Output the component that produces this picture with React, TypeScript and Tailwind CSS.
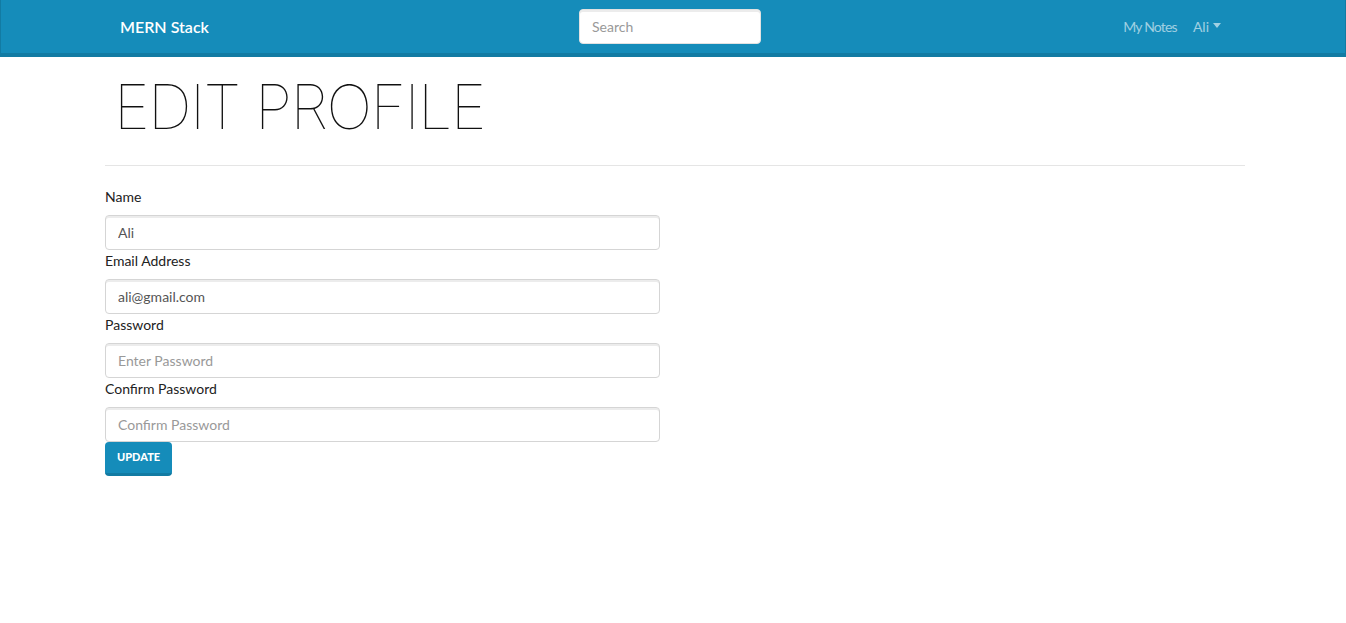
import { useState } from "react"

const FIELDS = [
  { id: "name", label: "Name", type: "text", placeholder: "Enter Name", initial: "Ali" },
  { id: "email", label: "Email Address", type: "email", placeholder: "Enter Email", initial: "ali@gmail.com" },
  { id: "password", label: "Password", type: "password", placeholder: "Enter Password", initial: "" },
  { id: "confirm", label: "Confirm Password", type: "password", placeholder: "Confirm Password", initial: "" },
]

function Header() {
  return (
    <nav className="bg-[#158cba] border-x border-b-4 border-[#127ba3] h-[57px]">
      <div className="mx-auto w-[1110px] h-full flex items-center">
        <a className="text-white text-[16px] font-semibold ml-[2px] w-[300px]">MERN Stack</a>
        <div className="flex-1 flex justify-center pr-[8px]">
          <input
            placeholder="Search"
            className="w-[182px] h-[35px] rounded-[4px] bg-white border border-[#e2e2e2] px-3 text-[14px] text-[#555] placeholder:text-[#999] outline-none shadow-[inset_0_2px_0_rgba(0,0,0,0.075)]"
          />
        </div>
        <div className="w-[300px] flex justify-end items-center gap-[16px] pr-[7px] text-[14px] text-white/60">
          <span className="tracking-[-0.8px]">My Notes</span>
          <span className="flex items-center gap-[4px]">
            Ali
            <span className="border-x-[4px] border-x-transparent border-t-[5px] border-t-white/60 mt-[-2px]" />
          </span>
        </div>
      </div>
    </nav>
  )
}

export default function App() {
  const [values, setValues] = useState<Record<string, string>>(
    Object.fromEntries(FIELDS.map(f => [f.id, f.initial]))
  )

  return (
    <div className="min-h-screen bg-white text-[#222] font-['Lato','Liberation_Sans',sans-serif]">
      <Header />
      <main className="w-[1140px] ml-[105px]">
        {/* Title */}
        <h1 className="pt-[12px] pl-[9px] h-[88px] text-[61px] leading-[77px] font-thin font-['Inter','Lato',sans-serif] text-[#111] tracking-[-1.6px]">EDIT PROFILE</h1>
        <hr className="mt-[20px] border-t border-[#e5e5e5]" />

        <form className="w-[555px] mt-[20px]" onSubmit={e => e.preventDefault()}>
          {FIELDS.map(f => (
            <div key={f.id}>
              <label htmlFor={f.id} className="block text-[14px] leading-[21px] mb-[8px] text-[#222]">{f.label}</label>
              <input
                id={f.id}
                type={f.type}
                placeholder={f.placeholder}
                value={values[f.id]}
                onChange={e => setValues({ ...values, [f.id]: e.target.value })}
                className="block w-full h-[35px] rounded-[4px] border border-[#d5d5d5] px-3 text-[14px] text-[#555] placeholder:text-[#999] outline-none shadow-[inset_0_2px_0_rgba(0,0,0,0.075)]"
              />
            </div>
          ))}
          <button
            type="submit"
            className="h-[34px] px-[12px] rounded-[4px] bg-[#158cba] border-b-[3px] border-[#127ba3] text-white text-[11px] font-black uppercase"
          >
            Update
          </button>
        </form>
      </main>
    </div>
  )
}
